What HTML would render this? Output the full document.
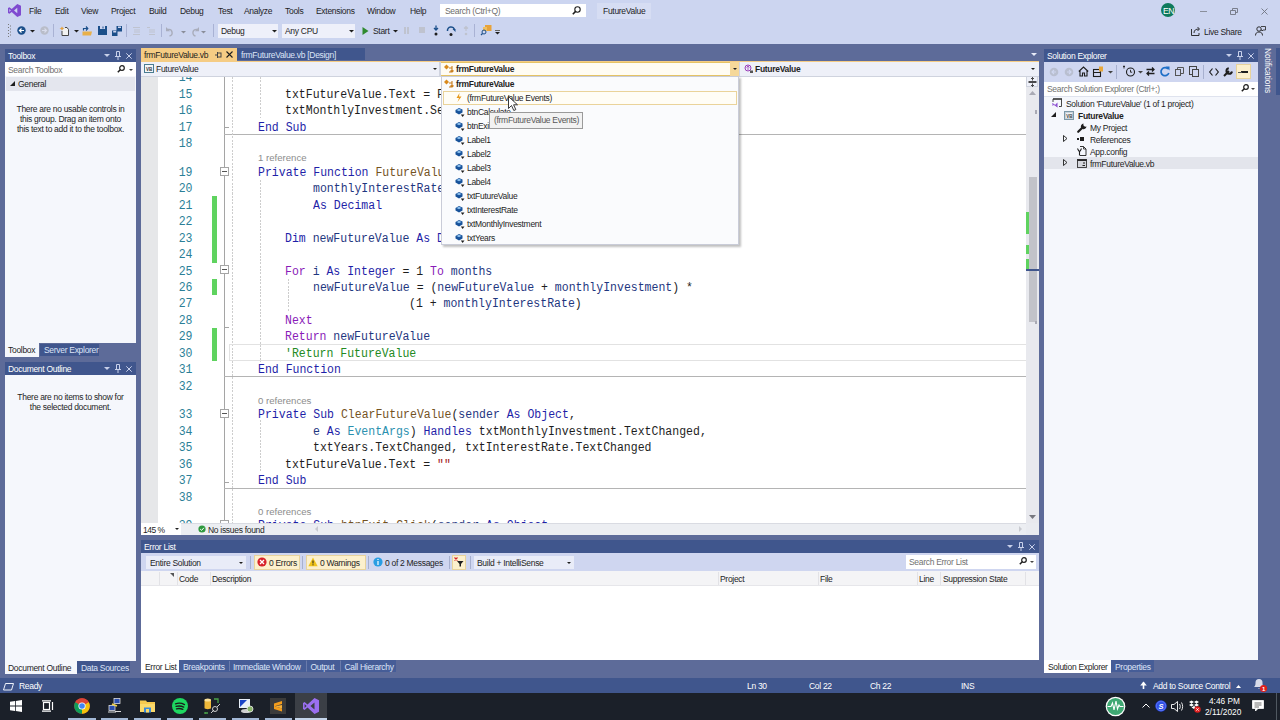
<!DOCTYPE html><html><head><meta charset="utf-8"><style>
html,body{margin:0;padding:0;}
body{width:1280px;height:720px;position:relative;overflow:hidden;background:#ccd5f0;font-family:"Liberation Sans",sans-serif;}
.a{position:absolute;}
.t{position:absolute;white-space:pre;line-height:1;}
.m{position:absolute;white-space:pre;line-height:1;font-family:"Liberation Mono",monospace;}
svg{position:absolute;overflow:visible;}
</style></head><body>
<div class="a" style="left:0px;top:44px;width:1280px;height:634px;background:#5d6b99;"></div>
<div class="a" style="left:0px;top:678px;width:1280px;height:15px;background:#40568d;"></div>
<div class="a" style="left:0px;top:693px;width:1280px;height:27px;background:#1b2029;"></div>
<div class="t" style="left:29px;top:6.5px;font-size:8.5px;color:#1e1e1e;letter-spacing:-0.3px;">File</div>
<div class="t" style="left:55px;top:6.5px;font-size:8.5px;color:#1e1e1e;letter-spacing:-0.3px;">Edit</div>
<div class="t" style="left:81px;top:6.5px;font-size:8.5px;color:#1e1e1e;letter-spacing:-0.3px;">View</div>
<div class="t" style="left:111px;top:6.5px;font-size:8.5px;color:#1e1e1e;letter-spacing:-0.3px;">Project</div>
<div class="t" style="left:149px;top:6.5px;font-size:8.5px;color:#1e1e1e;letter-spacing:-0.3px;">Build</div>
<div class="t" style="left:180px;top:6.5px;font-size:8.5px;color:#1e1e1e;letter-spacing:-0.3px;">Debug</div>
<div class="t" style="left:218px;top:6.5px;font-size:8.5px;color:#1e1e1e;letter-spacing:-0.3px;">Test</div>
<div class="t" style="left:244px;top:6.5px;font-size:8.5px;color:#1e1e1e;letter-spacing:-0.3px;">Analyze</div>
<div class="t" style="left:285px;top:6.5px;font-size:8.5px;color:#1e1e1e;letter-spacing:-0.3px;">Tools</div>
<div class="t" style="left:316px;top:6.5px;font-size:8.5px;color:#1e1e1e;letter-spacing:-0.3px;">Extensions</div>
<div class="t" style="left:367px;top:6.5px;font-size:8.5px;color:#1e1e1e;letter-spacing:-0.3px;">Window</div>
<div class="t" style="left:410px;top:6.5px;font-size:8.5px;color:#1e1e1e;letter-spacing:-0.3px;">Help</div>
<svg style="left:8px;top:4px" width="13" height="13" viewBox="0 0 14 14"><path d="M10 0 L14 2 V12 L10 14 L4 8.5 L1.5 10.5 L0 9.7 V4.3 L1.5 3.5 L4 5.5 Z M10 4 L6.5 7 L10 10 Z M1.5 5.5 V8.5 L3 7 Z" fill="#7f4bd0" fill-rule="evenodd"/></svg>
<div class="a" style="left:440px;top:4px;width:146px;height:13px;background:#fff;"></div>
<div class="t" style="left:445px;top:6.5px;font-size:8.5px;color:#6d6d6d;letter-spacing:-0.3px;">Search (Ctrl+Q)</div>
<svg style="left:572px;top:6px" width="9" height="9"><circle cx="5.5" cy="3.5" r="2.7" stroke="#1e1e1e" fill="none" stroke-width="1.1"/><path d="M3.6 5.4L0.8 8.2" stroke="#1e1e1e" stroke-width="1.6"/></svg>
<div class="a" style="left:597px;top:3px;width:54px;height:16px;background:#d6ddf3;"></div>
<div class="t" style="left:603px;top:6.5px;font-size:8.5px;color:#1e1e1e;letter-spacing:-0.3px;">FutureValue</div>
<div class="a" style="left:1161px;top:3px;width:14px;height:14px;border-radius:7px;background:#0e7a5c"></div>
<div class="t" style="left:1163px;top:6.5px;font-size:8.6px;color:#fff;letter-spacing:-0.4px;">EN</div>
<div class="a" style="left:1200px;top:10.5px;width:7px;height:1.2px;background:#8a8f9c;"></div>
<svg style="left:1230px;top:8px" width="8" height="7"><path d="M0.5 2.5H5.5V6.5H0.5Z M2.5 2.5V0.5H7.5V4.5H5.5" stroke="#6f7480" fill="none" stroke-width="0.9"/></svg>
<svg style="left:1261px;top:8px" width="7" height="7"><path d="M0.5 0.5L6.5 6.5M6.5 0.5L0.5 6.5" stroke="#6f7480" stroke-width="0.9"/></svg>
<div class="t" style="left:1204px;top:28.0px;font-size:8.5px;color:#1e1e1e;letter-spacing:-0.3px;">Live Share</div>
<div class="a" style="left:5px;top:49px;width:131px;height:13px;background:#40568d;"></div>
<div class="t" style="left:8px;top:52.0px;font-size:8.5px;color:#ffffff;letter-spacing:-0.3px;">Toolbox</div>
<svg style="left:104px;top:54px" width="6" height="4"><path d="M0 0H6L3 3Z" fill="#c8d0ea"/></svg>
<svg style="left:115px;top:51px" width="6" height="9"><path d="M1.5 0.5H4.5V5.5H1.5Z M0 5.5H6 M3 5.5V9" stroke="#c8d0ea" fill="none" stroke-width="1"/></svg>
<svg style="left:126px;top:52.5px" width="6" height="6"><path d="M0.3 0.3L5.7 5.7M5.7 0.3L0.3 5.7" stroke="#c8d0ea" stroke-width="1"/></svg>
<div class="a" style="left:5px;top:62px;width:131px;height:14px;background:#ffffff;"></div>
<div class="t" style="left:8px;top:65.5px;font-size:8.5px;color:#717171;letter-spacing:-0.3px;">Search Toolbox</div>
<svg style="left:117px;top:65px" width="8" height="8"><circle cx="5" cy="3" r="2.3" stroke="#1e1e1e" fill="none" stroke-width="1.2"/><path d="M3.3 4.7L0.8 7.2" stroke="#1e1e1e" stroke-width="1.5"/></svg>
<svg style="left:129px;top:69px" width="4" height="3"><path d="M0 0H4L2 2Z" fill="#444"/></svg>
<div class="a" style="left:5px;top:76px;width:131px;height:267px;background:#f5f7fc;"></div>
<div class="a" style="left:6px;top:77px;width:129px;height:14px;background:#e4e6ee;"></div>
<svg style="left:10px;top:81px" width="6" height="6"><path d="M5 0V5H0Z" fill="#1e1e1e"/></svg>
<div class="t" style="left:18px;top:79.5px;font-size:8.5px;color:#1e1e1e;letter-spacing:-0.3px;">General</div>
<div class="t" style="left:5px;width:131px;text-align:center;top:105px;font-size:8.5px;letter-spacing:-0.3px;color:#1e1e1e">There are no usable controls in</div>
<div class="t" style="left:5px;width:131px;text-align:center;top:115px;font-size:8.5px;letter-spacing:-0.3px;color:#1e1e1e">this group. Drag an item onto</div>
<div class="t" style="left:5px;width:131px;text-align:center;top:125px;font-size:8.5px;letter-spacing:-0.3px;color:#1e1e1e">this text to add it to the toolbox.</div>
<div class="a" style="left:5px;top:343px;width:34px;height:14px;background:#f5f7fc;"></div>
<div class="t" style="left:8px;top:345.5px;font-size:8.5px;color:#1e1e1e;letter-spacing:-0.3px;">Toolbox</div>
<div class="a" style="left:40px;top:344px;width:59px;height:12px;background:#40568d;"></div>
<div class="t" style="left:44px;top:345.5px;font-size:8.5px;color:#dde4f7;letter-spacing:-0.3px;">Server Explorer</div>
<div class="a" style="left:5px;top:362px;width:131px;height:13px;background:#40568d;"></div>
<div class="t" style="left:8px;top:365.0px;font-size:8.5px;color:#ffffff;letter-spacing:-0.3px;">Document Outline</div>
<svg style="left:104px;top:367px" width="6" height="4"><path d="M0 0H6L3 3Z" fill="#c8d0ea"/></svg>
<svg style="left:115px;top:364px" width="6" height="9"><path d="M1.5 0.5H4.5V5.5H1.5Z M0 5.5H6 M3 5.5V9" stroke="#c8d0ea" fill="none" stroke-width="1"/></svg>
<svg style="left:126px;top:365.5px" width="6" height="6"><path d="M0.3 0.3L5.7 5.7M5.7 0.3L0.3 5.7" stroke="#c8d0ea" stroke-width="1"/></svg>
<div class="a" style="left:5px;top:375px;width:131px;height:286px;background:#f5f7fc;"></div>
<div class="t" style="left:5px;width:131px;text-align:center;top:393px;font-size:8.5px;letter-spacing:-0.3px;color:#1e1e1e">There are no items to show for</div>
<div class="t" style="left:5px;width:131px;text-align:center;top:403px;font-size:8.5px;letter-spacing:-0.3px;color:#1e1e1e">the selected document.</div>
<div class="a" style="left:5px;top:661px;width:72px;height:13px;background:#f5f7fc;"></div>
<div class="t" style="left:8px;top:663.5px;font-size:8.5px;color:#1e1e1e;letter-spacing:-0.3px;">Document Outline</div>
<div class="a" style="left:77px;top:661px;width:53px;height:12px;background:#40568d;"></div>
<div class="t" style="left:81px;top:663.5px;font-size:8.5px;color:#dde4f7;letter-spacing:-0.3px;">Data Sources</div>
<div class="a" style="left:141px;top:48px;width:96px;height:14px;background:#f5cc84;"></div>
<div class="t" style="left:144px;top:50.5px;font-size:8.5px;color:#1e1e1e;letter-spacing:-0.3px;">frmFutureValue.vb</div>
<svg style="left:215px;top:52px" width="7" height="6"><path d="M0 3H2" stroke="#444" stroke-width="1"/><rect x="2.5" y="1" width="3.5" height="4" stroke="#444" fill="none" stroke-width="1"/><path d="M2.5 0V6" stroke="#444" stroke-width="1"/></svg>
<svg style="left:226px;top:51px" width="7" height="7"><path d="M0.5 0.5L6.5 6.5M6.5 0.5L0.5 6.5" stroke="#1e1e1e" stroke-width="1.1"/></svg>
<div class="a" style="left:237px;top:48px;width:128px;height:12px;background:#40568d;"></div>
<div class="t" style="left:241px;top:50.5px;font-size:8.5px;color:#dde4f7;letter-spacing:-0.3px;">frmFutureValue.vb [Design]</div>
<svg style="left:1031px;top:53px" width="6" height="4"><path d="M0 0H6L3 3Z" fill="#e8ecf8"/></svg>
<div class="a" style="left:141px;top:61px;width:898px;height:1px;background:#f5cc84;"></div>
<div class="a" style="left:141px;top:62px;width:898px;height:14px;background:#eef0f8;"></div>
<div class="a" style="left:141px;top:76px;width:898px;height:1px;background:#cfd3de;"></div>
<svg style="left:144px;top:64px" width="10" height="9"><rect x="0.5" y="0.5" width="9" height="8" fill="#f4f6f8" stroke="#4a7c90"/><text x="2" y="6.5" font-size="4.5" font-family="Liberation Sans" fill="#333" font-weight="bold">VB</text></svg>
<div class="t" style="left:156px;top:65.0px;font-size:8.5px;color:#1e1e1e;letter-spacing:-0.3px;">FutureValue</div>
<svg style="left:433px;top:68px" width="4" height="3"><path d="M0 0H4L2 2Z" fill="#1e1e1e"/></svg>
<div class="a" style="left:439px;top:62px;width:2px;height:14px;background:#d0d4e0;"></div>
<div class="a" style="left:441px;top:62px;width:298px;height:14px;background:#fffcf3;"></div>
<div class="a" style="left:441px;top:62px;width:298px;height:1px;background:#e5c365;"></div>
<div class="a" style="left:441px;top:75px;width:298px;height:1px;background:#e5c365;"></div>
<div class="a" style="left:730px;top:62px;width:9px;height:14px;background:#f5d89a;"></div>
<svg style="left:733px;top:68px" width="4" height="3"><path d="M0 0H4L2 2Z" fill="#1e1e1e"/></svg>
<svg style="left:444px;top:64px" width="10" height="9"><path d="M0 3L2.5 0.5L5 3L2.5 5.5Z" fill="#d98a1e"/><path d="M5 4H8V8H5 M8 4V2 M8 8L6.5 6.5 M8 8L9.5 6.5" stroke="#c87d1c" fill="none" stroke-width="1.1"/></svg>
<div class="t" style="left:456px;top:64.8px;font-size:8.5px;color:#1e1e1e;letter-spacing:-0.3px;"><b>frmFutureValue</b></div>
<div class="a" style="left:739px;top:62px;width:1px;height:14px;background:#d0d4e0;"></div>
<svg style="left:744px;top:64px" width="10" height="10"><circle cx="4" cy="4" r="3" stroke="#9a3fb8" fill="none" stroke-width="1"/><path d="M4 2V6 M2.5 3.5L4 2L5.5 3.5" stroke="#9a3fb8" fill="none" stroke-width="0.8"/><rect x="6" y="6.5" width="3" height="2.5" fill="#555"/></svg>
<div class="t" style="left:755px;top:64.8px;font-size:8.5px;color:#1e1e1e;letter-spacing:-0.3px;"><b>FutureValue</b></div>
<svg style="left:1031px;top:68px" width="4" height="3"><path d="M0 0H4L2 2Z" fill="#1e1e1e"/></svg>
<div class="a" style="left:141px;top:77px;width:17px;height:446px;background:#e6e7e9;"></div>
<div class="a" style="left:158px;top:77px;width:868px;height:446px;background:#ffffff;"></div>
<div class="a" style="left:1026px;top:77px;width:13px;height:446px;background:#e8e9ee;"></div>
<div class="a" style="left:0;top:77px;width:1026px;height:446px;overflow:hidden"><div class="a" style="left:0;top:-77px;width:1280px;height:720px">
<div class="a" style="left:224px;top:77px;width:1px;height:446px;background:#a5a5a5;"></div>
<div class="a" style="left:224px;top:133.5px;width:802px;height:1.2px;background:#b4b4b4;"></div>
<div class="a" style="left:224px;top:375.5px;width:802px;height:1.2px;background:#b4b4b4;"></div>
<div class="a" style="left:224px;top:487.5px;width:802px;height:1.2px;background:#b4b4b4;"></div>
<div class="a" style="left:224px;top:127px;width:5px;height:1px;background:#a5a5a5;"></div>
<div class="a" style="left:224px;top:327px;width:5px;height:1px;background:#a5a5a5;"></div>
<div class="a" style="left:224px;top:482px;width:5px;height:1px;background:#a5a5a5;"></div>
<div class="a" style="left:232px;top:77px;width:1px;height:446px;background:repeating-linear-gradient(to bottom,#cdcdcd 0,#cdcdcd 2px,transparent 2px,transparent 3.3px)"></div>
<div class="a" style="left:260px;top:77px;width:1px;height:41px;background:repeating-linear-gradient(to bottom,#cdcdcd 0,#cdcdcd 2px,transparent 2px,transparent 3.3px)"></div>
<div class="a" style="left:260px;top:180px;width:1px;height:182px;background:repeating-linear-gradient(to bottom,#cdcdcd 0,#cdcdcd 2px,transparent 2px,transparent 3.3px)"></div>
<div class="a" style="left:260px;top:420px;width:1px;height:51px;background:repeating-linear-gradient(to bottom,#cdcdcd 0,#cdcdcd 2px,transparent 2px,transparent 3.3px)"></div>
<div class="a" style="left:288px;top:279px;width:1px;height:32px;background:repeating-linear-gradient(to bottom,#cdcdcd 0,#cdcdcd 2px,transparent 2px,transparent 3.3px)"></div>
<div class="a" style="left:229px;top:344px;width:797px;height:15px;border:1px solid #e2e2e2;border-right:none"></div>
<div class="a" style="left:212px;top:196px;width:5px;height:67px;background:#5fd35f;"></div>
<div class="a" style="left:212px;top:279px;width:5px;height:16px;background:#5fd35f;"></div>
<div class="a" style="left:212px;top:328px;width:5px;height:33px;background:#5fd35f;"></div>
<div class="a" style="left:219.5px;top:166.7px;width:7px;height:7px;border:1px solid #a5a5a5;background:#fff"></div>
<div class="a" style="left:221.5px;top:170.7px;width:5px;height:1px;background:#555;"></div>
<div class="a" style="left:219.5px;top:265.4px;width:7px;height:7px;border:1px solid #a5a5a5;background:#fff"></div>
<div class="a" style="left:221.5px;top:269.4px;width:5px;height:1px;background:#555;"></div>
<div class="a" style="left:219.5px;top:409.3px;width:7px;height:7px;border:1px solid #a5a5a5;background:#fff"></div>
<div class="a" style="left:221.5px;top:413.3px;width:5px;height:1px;background:#555;"></div>
<div class="a" style="left:219.5px;top:520.3px;width:7px;height:7px;border:1px solid #a5a5a5;background:#fff"></div>
<div class="a" style="left:221.5px;top:524.3px;width:5px;height:1px;background:#555;"></div>
<div class="m" style="left:149px;width:43.5px;text-align:right;top:72.25px;font-size:12px;color:#2b7f98;transform:scaleX(0.9593);transform-origin:100% 0">14</div>
<div class="m" style="left:149px;width:43.5px;text-align:right;top:88.70px;font-size:12px;color:#2b7f98;transform:scaleX(0.9593);transform-origin:100% 0">15</div>
<div class="m" style="left:149px;width:43.5px;text-align:right;top:105.15px;font-size:12px;color:#2b7f98;transform:scaleX(0.9593);transform-origin:100% 0">16</div>
<div class="m" style="left:149px;width:43.5px;text-align:right;top:121.60px;font-size:12px;color:#2b7f98;transform:scaleX(0.9593);transform-origin:100% 0">17</div>
<div class="m" style="left:149px;width:43.5px;text-align:right;top:138.05px;font-size:12px;color:#2b7f98;transform:scaleX(0.9593);transform-origin:100% 0">18</div>
<div class="m" style="left:149px;width:43.5px;text-align:right;top:166.80px;font-size:12px;color:#2b7f98;transform:scaleX(0.9593);transform-origin:100% 0">19</div>
<div class="m" style="left:149px;width:43.5px;text-align:right;top:183.25px;font-size:12px;color:#2b7f98;transform:scaleX(0.9593);transform-origin:100% 0">20</div>
<div class="m" style="left:149px;width:43.5px;text-align:right;top:199.70px;font-size:12px;color:#2b7f98;transform:scaleX(0.9593);transform-origin:100% 0">21</div>
<div class="m" style="left:149px;width:43.5px;text-align:right;top:216.15px;font-size:12px;color:#2b7f98;transform:scaleX(0.9593);transform-origin:100% 0">22</div>
<div class="m" style="left:149px;width:43.5px;text-align:right;top:232.60px;font-size:12px;color:#2b7f98;transform:scaleX(0.9593);transform-origin:100% 0">23</div>
<div class="m" style="left:149px;width:43.5px;text-align:right;top:249.05px;font-size:12px;color:#2b7f98;transform:scaleX(0.9593);transform-origin:100% 0">24</div>
<div class="m" style="left:149px;width:43.5px;text-align:right;top:265.50px;font-size:12px;color:#2b7f98;transform:scaleX(0.9593);transform-origin:100% 0">25</div>
<div class="m" style="left:149px;width:43.5px;text-align:right;top:281.95px;font-size:12px;color:#2b7f98;transform:scaleX(0.9593);transform-origin:100% 0">26</div>
<div class="m" style="left:149px;width:43.5px;text-align:right;top:298.40px;font-size:12px;color:#2b7f98;transform:scaleX(0.9593);transform-origin:100% 0">27</div>
<div class="m" style="left:149px;width:43.5px;text-align:right;top:314.85px;font-size:12px;color:#2b7f98;transform:scaleX(0.9593);transform-origin:100% 0">28</div>
<div class="m" style="left:149px;width:43.5px;text-align:right;top:331.30px;font-size:12px;color:#2b7f98;transform:scaleX(0.9593);transform-origin:100% 0">29</div>
<div class="m" style="left:149px;width:43.5px;text-align:right;top:347.75px;font-size:12px;color:#2b7f98;transform:scaleX(0.9593);transform-origin:100% 0">30</div>
<div class="m" style="left:149px;width:43.5px;text-align:right;top:364.20px;font-size:12px;color:#2b7f98;transform:scaleX(0.9593);transform-origin:100% 0">31</div>
<div class="m" style="left:149px;width:43.5px;text-align:right;top:380.65px;font-size:12px;color:#2b7f98;transform:scaleX(0.9593);transform-origin:100% 0">32</div>
<div class="m" style="left:149px;width:43.5px;text-align:right;top:409.40px;font-size:12px;color:#2b7f98;transform:scaleX(0.9593);transform-origin:100% 0">33</div>
<div class="m" style="left:149px;width:43.5px;text-align:right;top:425.85px;font-size:12px;color:#2b7f98;transform:scaleX(0.9593);transform-origin:100% 0">34</div>
<div class="m" style="left:149px;width:43.5px;text-align:right;top:442.30px;font-size:12px;color:#2b7f98;transform:scaleX(0.9593);transform-origin:100% 0">35</div>
<div class="m" style="left:149px;width:43.5px;text-align:right;top:458.75px;font-size:12px;color:#2b7f98;transform:scaleX(0.9593);transform-origin:100% 0">36</div>
<div class="m" style="left:149px;width:43.5px;text-align:right;top:475.20px;font-size:12px;color:#2b7f98;transform:scaleX(0.9593);transform-origin:100% 0">37</div>
<div class="m" style="left:149px;width:43.5px;text-align:right;top:491.65px;font-size:12px;color:#2b7f98;transform:scaleX(0.9593);transform-origin:100% 0">38</div>
<div class="m" style="left:149px;width:43.5px;text-align:right;top:520.40px;font-size:12px;color:#2b7f98;transform:scaleX(0.9593);transform-origin:100% 0">39</div>
<div class="m" style="left:285.16px;top:88.70px;font-size:12px;transform:scaleX(0.9593);transform-origin:0 0"><span style="color:#1e1e1e">txtFutureValue.Text = FormatCurrency(futureValue)</span></div>
<div class="m" style="left:285.16px;top:105.15px;font-size:12px;transform:scaleX(0.9593);transform-origin:0 0"><span style="color:#1e1e1e">txtMonthlyInvestment.Select()</span></div>
<div class="m" style="left:257.53px;top:121.60px;font-size:12px;transform:scaleX(0.9593);transform-origin:0 0"><span style="color:#1f1fa8">End Sub</span></div>
<div class="m" style="left:257.53px;top:166.80px;font-size:12px;transform:scaleX(0.9593);transform-origin:0 0"><span style="color:#1f1fa8">Private Function </span><span style="color:#74531f">FutureValue</span><span style="color:#1e1e1e">(monthlyInvestment As Decimal,</span></div>
<div class="m" style="left:312.78px;top:183.25px;font-size:12px;transform:scaleX(0.9593);transform-origin:0 0"><span style="color:#1f377f">monthlyInterestRate</span><span style="color:#1e1e1e"> As Decimal, months As Integer)</span></div>
<div class="m" style="left:312.78px;top:199.70px;font-size:12px;transform:scaleX(0.9593);transform-origin:0 0"><span style="color:#1f1fa8">As Decimal</span></div>
<div class="m" style="left:285.16px;top:232.60px;font-size:12px;transform:scaleX(0.9593);transform-origin:0 0"><span style="color:#1f1fa8">Dim </span><span style="color:#1f377f">newFutureValue</span><span style="color:#1f1fa8"> As Decimal</span></div>
<div class="m" style="left:285.16px;top:265.50px;font-size:12px;transform:scaleX(0.9593);transform-origin:0 0"><span style="color:#8a1bb8">For </span><span style="color:#1f377f">i</span><span style="color:#1f1fa8"> As Integer</span><span style="color:#1e1e1e"> = 1 </span><span style="color:#8a1bb8">To </span><span style="color:#1f377f">months</span></div>
<div class="m" style="left:312.78px;top:281.95px;font-size:12px;transform:scaleX(0.9593);transform-origin:0 0"><span style="color:#1f377f">newFutureValue</span><span style="color:#1e1e1e"> = (</span><span style="color:#1f377f">newFutureValue</span><span style="color:#1e1e1e"> + </span><span style="color:#1f377f">monthlyInvestment</span><span style="color:#1e1e1e">) *</span></div>
<div class="m" style="left:409.48px;top:298.40px;font-size:12px;transform:scaleX(0.9593);transform-origin:0 0"><span style="color:#1e1e1e">(1 + </span><span style="color:#1f377f">monthlyInterestRate</span><span style="color:#1e1e1e">)</span></div>
<div class="m" style="left:285.16px;top:314.85px;font-size:12px;transform:scaleX(0.9593);transform-origin:0 0"><span style="color:#8a1bb8">Next</span></div>
<div class="m" style="left:285.16px;top:331.30px;font-size:12px;transform:scaleX(0.9593);transform-origin:0 0"><span style="color:#8a1bb8">Return </span><span style="color:#1f377f">newFutureValue</span></div>
<div class="m" style="left:285.16px;top:347.75px;font-size:12px;transform:scaleX(0.9593);transform-origin:0 0"><span style="color:#238a23">'Return FutureValue</span></div>
<div class="m" style="left:257.53px;top:364.20px;font-size:12px;transform:scaleX(0.9593);transform-origin:0 0"><span style="color:#1f1fa8">End Function</span></div>
<div class="m" style="left:257.53px;top:409.40px;font-size:12px;transform:scaleX(0.9593);transform-origin:0 0"><span style="color:#1f1fa8">Private Sub </span><span style="color:#74531f">ClearFutureValue</span><span style="color:#1e1e1e">(</span><span style="color:#1f377f">sender</span><span style="color:#1f1fa8"> As Object</span><span style="color:#1e1e1e">,</span></div>
<div class="m" style="left:312.78px;top:425.85px;font-size:12px;transform:scaleX(0.9593);transform-origin:0 0"><span style="color:#1f377f">e</span><span style="color:#1f1fa8"> As </span><span style="color:#2b91af">EventArgs</span><span style="color:#1e1e1e">) </span><span style="color:#1f1fa8">Handles</span><span style="color:#1e1e1e"> txtMonthlyInvestment.TextChanged,</span></div>
<div class="m" style="left:312.78px;top:442.30px;font-size:12px;transform:scaleX(0.9593);transform-origin:0 0"><span style="color:#1e1e1e">txtYears.TextChanged, txtInterestRate.TextChanged</span></div>
<div class="m" style="left:285.16px;top:458.75px;font-size:12px;transform:scaleX(0.9593);transform-origin:0 0"><span style="color:#1e1e1e">txtFutureValue.Text = </span><span style="color:#a31515">""</span></div>
<div class="m" style="left:257.53px;top:475.20px;font-size:12px;transform:scaleX(0.9593);transform-origin:0 0"><span style="color:#1f1fa8">End Sub</span></div>
<div class="m" style="left:257.53px;top:520.40px;font-size:12px;transform:scaleX(0.9593);transform-origin:0 0"><span style="color:#1f1fa8">Private Sub </span><span style="color:#74531f">btnExit_Click</span><span style="color:#1e1e1e">(</span><span style="color:#1f377f">sender</span><span style="color:#1f1fa8"> As Object</span><span style="color:#1e1e1e">,</span></div>
<div class="t" style="left:258px;top:152.5px;font-size:9.6px;color:#8d8d8d;">1 reference</div>
<div class="t" style="left:258px;top:395.5px;font-size:9.6px;color:#8d8d8d;">0 references</div>
<div class="t" style="left:258px;top:506.5px;font-size:9.6px;color:#8d8d8d;">0 references</div>
</div></div>
<div class="a" style="left:441px;top:76px;width:296px;height:167px;background:#fafbfd;border:1px solid #c9ccd8;box-shadow:2px 2px 2px rgba(0,0,0,0.25)"></div>
<svg style="left:444px;top:79px" width="10" height="9"><path d="M0 3L2.5 0.5L5 3L2.5 5.5Z" fill="#d98a1e"/><path d="M5 4H8V8H5 M8 4V2 M8 8L6.5 6.5 M8 8L9.5 6.5" stroke="#c87d1c" fill="none" stroke-width="1.1"/></svg>
<div class="t" style="left:456px;top:79.5px;font-size:8.5px;color:#1e1e1e;letter-spacing:-0.3px;"><b>frmFutureValue</b></div>
<div class="a" style="left:443px;top:91px;width:292px;height:12px;background:#fffdf6;border:1px solid #ead39a"></div>
<svg style="left:456px;top:93px" width="6" height="9"><path d="M3.5 0L0.5 5H3L1.5 9L5.5 3.5H3Z" fill="#e79a1e"/></svg>
<div class="t" style="left:467px;top:93.5px;font-size:8.5px;color:#1e1e1e;letter-spacing:-0.3px;">(frmFutureValue Events)</div>
<svg style="left:455px;top:107px" width="10" height="11"><path d="M0.5 3L4 1L7.5 2.5V5.5L4 7.5L0.5 5.5Z" fill="#17529a"/><path d="M1.5 3L4 4.2L6.5 3L4 1.8Z" fill="#8cc0ee"/><path d="M5.8 7.6H9.5L7.65 10Z" fill="#1e1e1e"/></svg>
<div class="t" style="left:467px;top:107.5px;font-size:8.5px;color:#1e1e1e;letter-spacing:-0.3px;">btnCalculate</div>
<svg style="left:455px;top:121px" width="10" height="11"><path d="M0.5 3L4 1L7.5 2.5V5.5L4 7.5L0.5 5.5Z" fill="#17529a"/><path d="M1.5 3L4 4.2L6.5 3L4 1.8Z" fill="#8cc0ee"/><path d="M5.8 7.6H9.5L7.65 10Z" fill="#1e1e1e"/></svg>
<div class="t" style="left:467px;top:121.5px;font-size:8.5px;color:#1e1e1e;letter-spacing:-0.3px;">btnExit</div>
<svg style="left:455px;top:135px" width="10" height="11"><path d="M0.5 3L4 1L7.5 2.5V5.5L4 7.5L0.5 5.5Z" fill="#17529a"/><path d="M1.5 3L4 4.2L6.5 3L4 1.8Z" fill="#8cc0ee"/><path d="M5.8 7.6H9.5L7.65 10Z" fill="#1e1e1e"/></svg>
<div class="t" style="left:467px;top:135.5px;font-size:8.5px;color:#1e1e1e;letter-spacing:-0.3px;">Label1</div>
<svg style="left:455px;top:149px" width="10" height="11"><path d="M0.5 3L4 1L7.5 2.5V5.5L4 7.5L0.5 5.5Z" fill="#17529a"/><path d="M1.5 3L4 4.2L6.5 3L4 1.8Z" fill="#8cc0ee"/><path d="M5.8 7.6H9.5L7.65 10Z" fill="#1e1e1e"/></svg>
<div class="t" style="left:467px;top:149.5px;font-size:8.5px;color:#1e1e1e;letter-spacing:-0.3px;">Label2</div>
<svg style="left:455px;top:163px" width="10" height="11"><path d="M0.5 3L4 1L7.5 2.5V5.5L4 7.5L0.5 5.5Z" fill="#17529a"/><path d="M1.5 3L4 4.2L6.5 3L4 1.8Z" fill="#8cc0ee"/><path d="M5.8 7.6H9.5L7.65 10Z" fill="#1e1e1e"/></svg>
<div class="t" style="left:467px;top:163.5px;font-size:8.5px;color:#1e1e1e;letter-spacing:-0.3px;">Label3</div>
<svg style="left:455px;top:177px" width="10" height="11"><path d="M0.5 3L4 1L7.5 2.5V5.5L4 7.5L0.5 5.5Z" fill="#17529a"/><path d="M1.5 3L4 4.2L6.5 3L4 1.8Z" fill="#8cc0ee"/><path d="M5.8 7.6H9.5L7.65 10Z" fill="#1e1e1e"/></svg>
<div class="t" style="left:467px;top:177.5px;font-size:8.5px;color:#1e1e1e;letter-spacing:-0.3px;">Label4</div>
<svg style="left:455px;top:191px" width="10" height="11"><path d="M0.5 3L4 1L7.5 2.5V5.5L4 7.5L0.5 5.5Z" fill="#17529a"/><path d="M1.5 3L4 4.2L6.5 3L4 1.8Z" fill="#8cc0ee"/><path d="M5.8 7.6H9.5L7.65 10Z" fill="#1e1e1e"/></svg>
<div class="t" style="left:467px;top:191.5px;font-size:8.5px;color:#1e1e1e;letter-spacing:-0.3px;">txtFutureValue</div>
<svg style="left:455px;top:205px" width="10" height="11"><path d="M0.5 3L4 1L7.5 2.5V5.5L4 7.5L0.5 5.5Z" fill="#17529a"/><path d="M1.5 3L4 4.2L6.5 3L4 1.8Z" fill="#8cc0ee"/><path d="M5.8 7.6H9.5L7.65 10Z" fill="#1e1e1e"/></svg>
<div class="t" style="left:467px;top:205.5px;font-size:8.5px;color:#1e1e1e;letter-spacing:-0.3px;">txtInterestRate</div>
<svg style="left:455px;top:219px" width="10" height="11"><path d="M0.5 3L4 1L7.5 2.5V5.5L4 7.5L0.5 5.5Z" fill="#17529a"/><path d="M1.5 3L4 4.2L6.5 3L4 1.8Z" fill="#8cc0ee"/><path d="M5.8 7.6H9.5L7.65 10Z" fill="#1e1e1e"/></svg>
<div class="t" style="left:467px;top:219.5px;font-size:8.5px;color:#1e1e1e;letter-spacing:-0.3px;">txtMonthlyInvestment</div>
<svg style="left:455px;top:233px" width="10" height="11"><path d="M0.5 3L4 1L7.5 2.5V5.5L4 7.5L0.5 5.5Z" fill="#17529a"/><path d="M1.5 3L4 4.2L6.5 3L4 1.8Z" fill="#8cc0ee"/><path d="M5.8 7.6H9.5L7.65 10Z" fill="#1e1e1e"/></svg>
<div class="t" style="left:467px;top:233.5px;font-size:8.5px;color:#1e1e1e;letter-spacing:-0.3px;">txtYears</div>
<div class="a" style="left:489px;top:112px;width:92px;height:15px;background:#f2f2f2;border:1px solid #9a9a9a"></div>
<div class="t" style="left:494px;top:115.5px;font-size:8.5px;color:#575757;letter-spacing:-0.3px;">(frmFutureValue Events)</div>
<svg style="left:508px;top:96px" width="10" height="16"><path d="M0.5 0.5V12.5L3.5 9.5L5.8 14.5L7.8 13.6L5.6 8.8H9.5Z" fill="#fff" stroke="#222" stroke-width="0.9"/></svg>
<div class="a" style="left:1026px;top:76px;width:12px;height:11px;background:#eef0f8;border:1px solid #cfd3de;box-sizing:border-box"></div>
<svg style="left:1028px;top:77px" width="9" height="10"><path d="M0.5 4.5H8.5M0.5 5.5H8.5 M4.5 0.5V3.5 M4.5 6.5V9.5 M3 2L4.5 0.5L6 2 M3 8L4.5 9.5L6 8" stroke="#1e1e1e" fill="none" stroke-width="0.8"/></svg>
<svg style="left:1029px;top:91px" width="7" height="4"><path d="M0 4L3.5 0L7 4Z" fill="#a9aab4"/></svg>
<div class="a" style="left:1035px;top:110px;width:2px;height:4px;background:#a9aab4;"></div>
<div class="a" style="left:1029px;top:177px;width:8px;height:145px;background:#c2c3c9;"></div>
<div class="a" style="left:1026px;top:212px;width:3px;height:22px;background:#5fd35f;"></div>
<div class="a" style="left:1026px;top:245px;width:3px;height:9px;background:#5fd35f;"></div>
<div class="a" style="left:1026px;top:259px;width:3px;height:10px;background:#5fd35f;"></div>
<div class="a" style="left:1026px;top:269px;width:13px;height:1.5px;background:#40568d;"></div>
<div class="a" style="left:1035px;top:321px;width:2px;height:3px;background:#a9aab4;"></div>
<svg style="left:1029px;top:515px" width="7" height="4"><path d="M0 0L7 0L3.5 4Z" fill="#77787f"/></svg>
<div class="a" style="left:141px;top:523px;width:885px;height:12px;background:#eceef2;"></div>
<div class="a" style="left:141px;top:523px;width:885px;height:1px;background:#d9dbe2;"></div>
<div class="a" style="left:1026px;top:523px;width:13px;height:12px;background:#e9ebf0;"></div>
<div class="a" style="left:141px;top:523px;width:40px;height:12px;background:#ffffff;"></div>
<div class="t" style="left:143px;top:525.5px;font-size:8.5px;color:#1e1e1e;letter-spacing:-0.3px;letter-spacing:-0.5px;">145 %</div>
<svg style="left:175px;top:528px" width="4" height="3"><path d="M0 0H4L2 2Z" fill="#1e1e1e"/></svg>
<svg style="left:198px;top:525px" width="8" height="8"><circle cx="4" cy="4" r="3.6" fill="#2f9a3e"/><path d="M2.2 4.1L3.6 5.4L5.9 2.8" stroke="#fff" stroke-width="1" fill="none"/></svg>
<div class="t" style="left:208px;top:525.5px;font-size:8.5px;color:#1e1e1e;letter-spacing:-0.3px;">No issues found</div>
<svg style="left:315px;top:526px" width="3" height="6"><path d="M3 0V6L0 3Z" fill="#c8cad0"/></svg>
<svg style="left:1019px;top:526px" width="3" height="6"><path d="M0 0V6L3 3Z" fill="#c8cad0"/></svg>
<div class="a" style="left:141px;top:540px;width:898px;height:13px;background:#40568d;"></div>
<div class="t" style="left:144px;top:543.0px;font-size:8.5px;color:#ffffff;letter-spacing:-0.3px;">Error List</div>
<svg style="left:1007px;top:545px" width="6" height="4"><path d="M0 0H6L3 3Z" fill="#c8d0ea"/></svg>
<svg style="left:1018px;top:542px" width="6" height="9"><path d="M1.5 0.5H4.5V5.5H1.5Z M0 5.5H6 M3 5.5V9" stroke="#c8d0ea" fill="none" stroke-width="1"/></svg>
<svg style="left:1029px;top:543.5px" width="6" height="6"><path d="M0.3 0.3L5.7 5.7M5.7 0.3L0.3 5.7" stroke="#c8d0ea" stroke-width="1"/></svg>
<div class="a" style="left:141px;top:553px;width:898px;height:18px;background:#cfd6f0;"></div>
<div class="a" style="left:146px;top:556px;width:100px;height:13px;background:#e9ecf8;"></div>
<div class="t" style="left:150px;top:558.5px;font-size:8.5px;color:#1e1e1e;letter-spacing:-0.3px;">Entire Solution</div>
<svg style="left:239px;top:562px" width="4" height="3"><path d="M0 0H4L2 2Z" fill="#1e1e1e"/></svg>
<div class="a" style="left:250px;top:556px;width:1px;height:13px;background:#a7b0cf;"></div>
<div class="a" style="left:253.5px;top:555px;width:44.5px;height:13px;background:#fcf0cd;border:1px solid #e8d39c"></div>
<svg style="left:257px;top:557px" width="10" height="10"><circle cx="5" cy="5" r="4.6" fill="#d7212a"/><path d="M3 3L7 7M7 3L3 7" stroke="#fff" stroke-width="1.3"/></svg>
<div class="t" style="left:269px;top:558.5px;font-size:8.5px;color:#1e1e1e;letter-spacing:-0.3px;">0 Errors</div>
<div class="a" style="left:302px;top:556px;width:1px;height:13px;background:#a7b0cf;"></div>
<div class="a" style="left:305.5px;top:555px;width:58px;height:13px;background:#fcf0cd;border:1px solid #e8d39c"></div>
<svg style="left:308px;top:557px" width="10" height="10"><path d="M5 0.5L9.7 9.3H0.3Z" fill="#f0c31b"/><path d="M5 3.5V6.5M5 7.3V8.3" stroke="#1e1e1e" stroke-width="1"/></svg>
<div class="t" style="left:320px;top:558.5px;font-size:8.5px;color:#1e1e1e;letter-spacing:-0.3px;">0 Warnings</div>
<div class="a" style="left:368px;top:556px;width:1px;height:13px;background:#a7b0cf;"></div>
<svg style="left:373px;top:557px" width="10" height="10"><circle cx="5" cy="5" r="4.6" fill="#2a9ee3"/><path d="M5 4V8M5 2V3" stroke="#fff" stroke-width="1.2"/></svg>
<div class="t" style="left:385px;top:558.5px;font-size:8.5px;color:#1e1e1e;letter-spacing:-0.3px;">0 of 2 Messages</div>
<div class="a" style="left:449px;top:556px;width:1px;height:13px;background:#a7b0cf;"></div>
<div class="a" style="left:452px;top:555px;width:12px;height:13px;background:#fcf0cd;border:1px solid #e8d39c"></div>
<svg style="left:454px;top:557px" width="10" height="10"><path d="M0.5 0.5L3.5 3.5M3.5 0.5L0.5 3.5" stroke="#d7212a" stroke-width="1.1"/><path d="M3 4H9.5L7 7V9.5H5.5V7Z" fill="#1e1e1e"/></svg>
<div class="a" style="left:470px;top:556px;width:1px;height:13px;background:#a7b0cf;"></div>
<div class="a" style="left:474px;top:556px;width:100px;height:13px;background:#e9ecf8;"></div>
<div class="t" style="left:477px;top:558.5px;font-size:8.5px;color:#1e1e1e;letter-spacing:-0.3px;">Build + IntelliSense</div>
<svg style="left:567px;top:562px" width="4" height="3"><path d="M0 0H4L2 2Z" fill="#1e1e1e"/></svg>
<div class="a" style="left:906px;top:555px;width:130px;height:14px;background:#ffffff;"></div>
<div class="t" style="left:909px;top:557.5px;font-size:8.5px;color:#717171;letter-spacing:-0.3px;">Search Error List</div>
<svg style="left:1019px;top:557px" width="8" height="8"><circle cx="5" cy="3" r="2.3" stroke="#1e1e1e" fill="none" stroke-width="1.2"/><path d="M3.3 4.7L0.8 7.2" stroke="#1e1e1e" stroke-width="1.5"/></svg>
<svg style="left:1030px;top:561px" width="4" height="3"><path d="M0 0H4L2 2Z" fill="#444"/></svg>
<div class="a" style="left:141px;top:571px;width:898px;height:14px;background:#f4f4f6;"></div>
<div class="a" style="left:141px;top:585px;width:898px;height:1px;background:#e6e6ea;"></div>
<div class="a" style="left:159px;top:572px;width:1px;height:13px;background:#e2e2e6;"></div>
<div class="a" style="left:177px;top:572px;width:1px;height:13px;background:#e2e2e6;"></div>
<div class="a" style="left:210px;top:572px;width:1px;height:13px;background:#e2e2e6;"></div>
<div class="a" style="left:718px;top:572px;width:1px;height:13px;background:#e2e2e6;"></div>
<div class="a" style="left:818px;top:572px;width:1px;height:13px;background:#e2e2e6;"></div>
<div class="a" style="left:917px;top:572px;width:1px;height:13px;background:#e2e2e6;"></div>
<div class="a" style="left:940px;top:572px;width:1px;height:13px;background:#e2e2e6;"></div>
<div class="a" style="left:1025px;top:572px;width:1px;height:13px;background:#e2e2e6;"></div>
<svg style="left:170px;top:573px" width="4" height="4"><path d="M0 0H4V4Z" fill="#555"/></svg>
<div class="t" style="left:179px;top:574.5px;font-size:8.5px;color:#1e1e1e;letter-spacing:-0.3px;">Code</div>
<div class="t" style="left:212px;top:574.5px;font-size:8.5px;color:#1e1e1e;letter-spacing:-0.3px;">Description</div>
<div class="t" style="left:720px;top:574.5px;font-size:8.5px;color:#1e1e1e;letter-spacing:-0.3px;">Project</div>
<div class="t" style="left:820px;top:574.5px;font-size:8.5px;color:#1e1e1e;letter-spacing:-0.3px;">File</div>
<div class="t" style="left:919px;top:574.5px;font-size:8.5px;color:#1e1e1e;letter-spacing:-0.3px;">Line</div>
<div class="t" style="left:943px;top:574.5px;font-size:8.5px;color:#1e1e1e;letter-spacing:-0.3px;">Suppression State</div>
<div class="a" style="left:141px;top:586px;width:898px;height:74px;background:#ffffff;"></div>
<div class="a" style="left:141px;top:660px;width:38px;height:13px;background:#ffffff;"></div>
<div class="t" style="left:145px;top:662.5px;font-size:8.5px;color:#1e1e1e;letter-spacing:-0.3px;">Error List</div>
<div class="a" style="left:179px;top:660px;width:49.5px;height:12px;background:#465d97;"></div>
<div class="t" style="left:183px;top:662.5px;font-size:8.5px;color:#dde4f7;letter-spacing:-0.3px;">Breakpoints</div>
<div class="a" style="left:229px;top:660px;width:77px;height:12px;background:#465d97;"></div>
<div class="t" style="left:233px;top:662.5px;font-size:8.5px;color:#dde4f7;letter-spacing:-0.3px;">Immediate Window</div>
<div class="a" style="left:306.5px;top:660px;width:33.5px;height:12px;background:#465d97;"></div>
<div class="t" style="left:310.5px;top:662.5px;font-size:8.5px;color:#dde4f7;letter-spacing:-0.3px;">Output</div>
<div class="a" style="left:340.5px;top:660px;width:55.5px;height:12px;background:#465d97;"></div>
<div class="t" style="left:344.5px;top:662.5px;font-size:8.5px;color:#dde4f7;letter-spacing:-0.3px;">Call Hierarchy</div>
<div class="a" style="left:228.5px;top:661px;width:1px;height:10px;background:#6a7bab;"></div>
<div class="a" style="left:306px;top:661px;width:1px;height:10px;background:#6a7bab;"></div>
<div class="a" style="left:340px;top:661px;width:1px;height:10px;background:#6a7bab;"></div>
<div class="a" style="left:1044px;top:49px;width:214px;height:13px;background:#40568d;"></div>
<div class="t" style="left:1047px;top:52.0px;font-size:8.5px;color:#ffffff;letter-spacing:-0.3px;">Solution Explorer</div>
<svg style="left:1226px;top:54px" width="6" height="4"><path d="M0 0H6L3 3Z" fill="#c8d0ea"/></svg>
<svg style="left:1237px;top:51px" width="6" height="9"><path d="M1.5 0.5H4.5V5.5H1.5Z M0 5.5H6 M3 5.5V9" stroke="#c8d0ea" fill="none" stroke-width="1"/></svg>
<svg style="left:1248px;top:52.5px" width="6" height="6"><path d="M0.3 0.3L5.7 5.7M5.7 0.3L0.3 5.7" stroke="#c8d0ea" stroke-width="1"/></svg>
<div class="a" style="left:1044px;top:62px;width:214px;height:20px;background:#cfd6f0;"></div>
<svg style="left:1049px;top:67px" width="10" height="10"><circle cx="5" cy="5" r="4.3" fill="#b9bfd0"/><path d="M7 5H3M5 3L3 5L5 7" stroke="#cfd6f0" stroke-width="1.1" fill="none"/></svg>
<svg style="left:1064px;top:67px" width="10" height="10"><circle cx="5" cy="5" r="4.3" fill="#b9bfd0"/><path d="M3 5H7M5 3L7 5L5 7" stroke="#cfd6f0" stroke-width="1.1" fill="none"/></svg>
<svg style="left:1078px;top:66px" width="11" height="11"><path d="M0.8 5.5L5.5 1L10.2 5.5 M2 4.5V10H4.5V7H6.5V10H9V4.5" stroke="#1e1e1e" fill="none" stroke-width="1.1"/></svg>
<svg style="left:1093px;top:66px" width="12" height="11"><rect x="0.5" y="3.5" width="7" height="7" stroke="#1e1e1e" fill="none" stroke-width="1.1"/><path d="M0.5 6.5H7.5" stroke="#1e1e1e"/><rect x="6" y="0.5" width="4" height="5" fill="#e8a73a"/></svg>
<svg style="left:1108px;top:71px" width="5" height="3"><path d="M0 0H5L2.5 2.5Z" fill="#444"/></svg>
<div class="a" style="left:1116px;top:65px;width:1px;height:14px;background:#a7b0cf;"></div>
<svg style="left:1123px;top:65px" width="13" height="12"><circle cx="7.5" cy="7" r="4" stroke="#1e1e1e" fill="none" stroke-width="1.1"/><path d="M7.5 4.8V7.2H9.2 M1 0.5V3.5 M0 1.5H2" stroke="#1e1e1e" fill="none" stroke-width="0.9"/></svg>
<svg style="left:1138px;top:71px" width="5" height="3"><path d="M0 0H5L2.5 2.5Z" fill="#444"/></svg>
<svg style="left:1146px;top:67px" width="9" height="9"><path d="M0.5 2.5H8M6 0.5L8 2.5L6 4.5 M8.5 6.5H1M3 4.5L1 6.5L3 8.5" stroke="#1e1e1e" fill="none" stroke-width="1.3"/></svg>
<svg style="left:1160px;top:66px" width="10" height="11"><path d="M8 3A4 4 0 1 0 8.8 7" stroke="#1e6fc7" fill="none" stroke-width="1.7"/><path d="M5.5 0.5H9.5V4.5Z" fill="#1e6fc7"/></svg>
<svg style="left:1175px;top:67px" width="9" height="9"><rect x="0.5" y="2.5" width="5" height="6" stroke="#555" fill="#cfd6f0"/><path d="M2.5 2.5V0.5H8.5V6.5H5.5" stroke="#555" fill="none"/></svg>
<svg style="left:1189px;top:66px" width="10" height="11"><rect x="0.5" y="0.5" width="7" height="8" stroke="#444" fill="none"/><rect x="3.5" y="3.5" width="6" height="7" stroke="#444" fill="#cfd6f0"/></svg>
<div class="a" style="left:1203px;top:65px;width:1px;height:14px;background:#a7b0cf;"></div>
<svg style="left:1209px;top:68px" width="10" height="8"><path d="M3.5 0.5L0.7 4L3.5 7.5M6.5 0.5L9.3 4L6.5 7.5" stroke="#1e1e1e" fill="none" stroke-width="1.2"/></svg>
<svg style="left:1223px;top:66px" width="11" height="11"><path d="M1 10L6 5M5.8 2.2A2.8 2.8 0 1 0 9 5.5" stroke="#1e1e1e" fill="none" stroke-width="2"/></svg>
<div class="a" style="left:1236px;top:64px;width:13px;height:13px;background:#fcf0cd;border:1px solid #e8d39c"></div>
<div class="a" style="left:1241px;top:71px;width:7px;height:2px;background:#1e1e1e;"></div>
<div class="a" style="left:1238px;top:72px;width:4px;height:1px;background:#555;"></div>
<div class="a" style="left:1044px;top:82px;width:214px;height:14px;background:#ffffff;"></div>
<div class="t" style="left:1047px;top:84.5px;font-size:8.5px;color:#717171;letter-spacing:-0.3px;">Search Solution Explorer (Ctrl+;)</div>
<svg style="left:1241px;top:84px" width="8" height="8"><circle cx="5" cy="3" r="2.3" stroke="#1e1e1e" fill="none" stroke-width="1.2"/><path d="M3.3 4.7L0.8 7.2" stroke="#1e1e1e" stroke-width="1.5"/></svg>
<svg style="left:1251px;top:88px" width="4" height="3"><path d="M0 0H4L2 2Z" fill="#444"/></svg>
<div class="a" style="left:1044px;top:96px;width:214px;height:564px;background:#f5f7fc;"></div>
<div class="a" style="left:1044px;top:96px;width:214px;height:1px;background:#dfe3ee;"></div>
<div class="a" style="left:1044px;top:157px;width:214px;height:12px;background:#e3e5ec;"></div>
<svg style="left:1052px;top:98px" width="11" height="10"><path d="M1 1H10" stroke="#333" stroke-width="1.6"/><path d="M9.5 1V8.5H7" stroke="#333" stroke-width="0.9" fill="none"/><path d="M1 1V4" stroke="#333" stroke-width="0.9"/><path d="M5.5 4.5L3.2 6.8L5.5 9V4.5Z M0.5 5.5L2 6.8L0.5 8Z" fill="#8a4bd0"/><path d="M0.5 5.5L5.5 9" stroke="#8a4bd0" stroke-width="1"/></svg>
<div class="t" style="left:1066px;top:99.5px;font-size:8.5px;color:#1e1e1e;letter-spacing:-0.3px;">Solution 'FutureValue' (1 of 1 project)</div>
<svg style="left:1051px;top:112px" width="5" height="5"><path d="M5 0V5H0Z" fill="#1e1e1e"/></svg>
<svg style="left:1064px;top:111px" width="10" height="9"><rect x="0.5" y="0.5" width="9" height="8" fill="#c9d3dc" stroke="#7d98a8"/><rect x="2" y="2" width="6" height="5" fill="#eef2f5"/><text x="2.2" y="6.6" font-size="4.5" font-family="Liberation Sans" fill="#444" font-weight="bold">VB</text></svg>
<div class="t" style="left:1078px;top:111.5px;font-size:8.5px;color:#1e1e1e;letter-spacing:-0.3px;"><b>FutureValue</b></div>
<svg style="left:1077px;top:123px" width="10" height="10"><path d="M1.2 8.8L5 5" stroke="#1e1e1e" stroke-width="2.2" stroke-linecap="round"/><path d="M6.5 0.5A3 3 0 0 0 4 4.5L5.5 6A3 3 0 0 0 9.5 3.5L8 3.8L6.3 2.2Z" fill="#1e1e1e"/></svg>
<div class="t" style="left:1090px;top:123.5px;font-size:8.5px;color:#1e1e1e;letter-spacing:-0.3px;">My Project</div>
<svg style="left:1063px;top:135px" width="5" height="7"><path d="M0.5 0.5L4 3.5L0.5 6.5Z" stroke="#1e1e1e" fill="none" stroke-width="0.9"/></svg>
<div class="a" style="left:1077px;top:138px;width:2px;height:2px;background:#1e1e1e;"></div>
<div class="a" style="left:1080px;top:137px;width:4px;height:4px;background:#1e1e1e;"></div>
<div class="t" style="left:1090px;top:135.5px;font-size:8.5px;color:#1e1e1e;letter-spacing:-0.3px;">References</div>
<svg style="left:1077px;top:146px" width="10" height="10"><path d="M3 0.5H6.5L9 3V9.5H3" stroke="#1e1e1e" fill="none" stroke-width="0.9"/><path d="M6.5 0.5V3H9" stroke="#1e1e1e" fill="none" stroke-width="0.8"/><path d="M0.5 2.5L1.8 5H3.2L4.5 2.5 M2.5 5V9.5" stroke="#1e1e1e" fill="none" stroke-width="1.1"/></svg>
<div class="t" style="left:1090px;top:147.5px;font-size:8.5px;color:#1e1e1e;letter-spacing:-0.3px;">App.config</div>
<svg style="left:1063px;top:159px" width="5" height="7"><path d="M0.5 0.5L4 3.5L0.5 6.5Z" stroke="#1e1e1e" fill="none" stroke-width="0.9"/></svg>
<svg style="left:1077px;top:159px" width="10" height="9"><rect x="0.5" y="0.5" width="9" height="8" fill="#d4d6dc" stroke="#333" stroke-width="0.9"/><path d="M0.5 1.2H9.5" stroke="#1e1e1e" stroke-width="1.5"/><path d="M6 4H8 M5.5 6.5H8" stroke="#1e1e1e" stroke-width="1"/></svg>
<div class="t" style="left:1090px;top:159.5px;font-size:8.5px;color:#1e1e1e;letter-spacing:-0.3px;">frmFutureValue.vb</div>
<div class="a" style="left:1044px;top:660px;width:66.5px;height:13px;background:#ffffff;"></div>
<div class="t" style="left:1048px;top:662.5px;font-size:8.5px;color:#1e1e1e;letter-spacing:-0.3px;">Solution Explorer</div>
<div class="a" style="left:1111px;top:660px;width:43px;height:12px;background:#465d97;"></div>
<div class="t" style="left:1115px;top:662.5px;font-size:8.5px;color:#dde4f7;letter-spacing:-0.3px;">Properties</div>
<div class="a" style="left:1276px;top:48px;width:4px;height:47px;background:#40568d;"></div>
<div class="t" style="left:1264px;top:48px;font-size:8.3px;color:#ffffff;writing-mode:vertical-rl">Notifications</div>
<svg style="left:2.5px;top:682.5px" width="11" height="8"><path d="M2.5 0.5H10.5L8.5 7H0.5Z" stroke="#eef2fb" fill="none" stroke-width="1"/></svg>
<div class="t" style="left:19px;top:681.5px;font-size:8.5px;color:#ffffff;letter-spacing:-0.3px;">Ready</div>
<div class="t" style="left:747px;top:681.5px;font-size:8.5px;color:#ffffff;letter-spacing:-0.3px;">Ln 30</div>
<div class="t" style="left:809px;top:681.5px;font-size:8.5px;color:#ffffff;letter-spacing:-0.3px;">Col 22</div>
<div class="t" style="left:870px;top:681.5px;font-size:8.5px;color:#ffffff;letter-spacing:-0.3px;">Ch 22</div>
<div class="t" style="left:961px;top:681.5px;font-size:8.5px;color:#ffffff;letter-spacing:-0.3px;">INS</div>
<svg style="left:1140px;top:681px" width="7" height="8"><path d="M3.5 8V1.5" stroke="#fff" stroke-width="1.6"/><path d="M0.2 4.5L3.5 0.5L6.8 4.5Z" fill="#fff"/></svg>
<div class="t" style="left:1153px;top:681.5px;font-size:8.5px;color:#ffffff;letter-spacing:-0.3px;">Add to Source Control</div>
<svg style="left:1236px;top:685px" width="5" height="3"><path d="M0 3H5L2.5 0Z" fill="#fff"/></svg>
<svg style="left:1253px;top:678px" width="15" height="15"><path d="M1 9C2.5 8 2.5 6 2.5 4.5A3.5 3.5 0 0 1 9.5 4.5C9.5 6 9.5 8 11 9Z M5 10A1.2 1.2 0 0 0 7 10" fill="#d8dcea"/><circle cx="10.5" cy="10.5" r="3.6" fill="#e0201c"/><text x="9" y="13" font-size="6" fill="#fff" font-family="Liberation Sans" font-weight="bold">1</text></svg>
<svg style="left:8px;top:24px" width="4" height="13"><rect x="0" y="0.0" width="1" height="1" fill="#777"/><rect x="2" y="1.5" width="1" height="1" fill="#777"/><rect x="0" y="3.0" width="1" height="1" fill="#777"/><rect x="2" y="4.5" width="1" height="1" fill="#777"/><rect x="0" y="6.0" width="1" height="1" fill="#777"/><rect x="2" y="7.5" width="1" height="1" fill="#777"/><rect x="0" y="9.0" width="1" height="1" fill="#777"/><rect x="2" y="10.5" width="1" height="1" fill="#777"/><rect x="0" y="12.0" width="1" height="1" fill="#777"/></svg>
<svg style="left:17px;top:26px" width="9" height="9"><circle cx="4.5" cy="4.5" r="4.2" fill="#1b4f8a"/><path d="M7 4.5H2.5M4.5 2.5L2.5 4.5L4.5 6.5" stroke="#fff" stroke-width="1.2" fill="none"/></svg>
<svg style="left:30px;top:30px" width="5" height="3"><path d="M0 0H5L2.5 2.5Z" fill="#1e1e1e"/></svg>
<svg style="left:40px;top:26px" width="9" height="9"><circle cx="4.5" cy="4.5" r="4.2" fill="#b9bdc9"/><path d="M2 4.5H6.5M4.5 2.5L6.5 4.5L4.5 6.5" stroke="#d8dcec" stroke-width="1.1" fill="none"/></svg>
<div class="a" style="left:53px;top:24px;width:1px;height:13px;background:#a9b2d4;"></div>
<svg style="left:60px;top:26px" width="10" height="10"><path d="M2 5V9.5H8.5V3.5L7 1.5H5" stroke="#333" fill="#f2f2f2" stroke-width="0.9"/><path d="M2 0.5L3 2L4.5 2.5L3 3L2 4.5L1 3L-0.5 2.5L1 2Z" fill="#e8a33a"/></svg>
<svg style="left:74px;top:30px" width="5" height="3"><path d="M0 0H5L2.5 2.5Z" fill="#1e1e1e"/></svg>
<svg style="left:82px;top:26px" width="11" height="10"><path d="M0.5 5.5H10L9 9.5H0.5Z" fill="#e8b04a"/><path d="M1.5 4.5V2.5H5.5 M4 0.5L5.8 2.5L4 4.5" stroke="#1b4f8a" stroke-width="1.2" fill="none"/></svg>
<svg style="left:98px;top:26px" width="9" height="9"><path d="M0 0H9V9H0Z M4.5 0V2.5" fill="#1b4f8a" stroke="none"/><rect x="2" y="0" width="5" height="3" fill="#cdd5f0"/><rect x="4.5" y="0.5" width="1" height="2" fill="#1b4f8a"/></svg>
<svg style="left:112px;top:26px" width="10" height="10"><rect x="4.5" y="0" width="5.5" height="5.5" fill="#1b4f8a"/><rect x="0" y="4.5" width="5.5" height="5.5" fill="#1b4f8a"/><rect x="6" y="0.5" width="3" height="1.5" fill="#cdd5f0"/><rect x="1.2" y="5" width="3" height="1.5" fill="#cdd5f0"/></svg>
<div class="a" style="left:126px;top:24px;width:1px;height:13px;background:#a9b2d4;"></div>
<svg style="left:133px;top:27px" width="8" height="8"><path d="M0 0.5H7M1 3H7M1 5H7M0 7.5H7" stroke="#bfc3cf" stroke-width="1"/></svg>
<svg style="left:147px;top:27px" width="9" height="8"><path d="M0 0.5H3M2 3H8M2 5H8M2 7.5H8" stroke="#bfc3cf" stroke-width="1"/></svg>
<div class="a" style="left:161px;top:24px;width:1px;height:13px;background:#a9b2d4;"></div>
<svg style="left:166px;top:26px" width="9" height="11"><path d="M2 3.5A3.3 3.3 0 1 1 3.5 10" stroke="#a9adbb" stroke-width="1.4" fill="none"/><path d="M0 1V5.2H4.2Z" fill="#a9adbb"/></svg>
<svg style="left:181px;top:31px" width="5" height="3"><path d="M0 0H5L2.5 2.5Z" fill="#8a8e9a"/></svg>
<svg style="left:190px;top:26px" width="9" height="11"><path d="M7 3.5A3.3 3.3 0 1 0 5.5 10" stroke="#a9adbb" stroke-width="1.4" fill="none"/><path d="M9 1V5.2H4.8Z" fill="#a9adbb"/></svg>
<svg style="left:201px;top:31px" width="5" height="3"><path d="M0 0H5L2.5 2.5Z" fill="#8a8e9a"/></svg>
<div class="a" style="left:213px;top:24px;width:1px;height:13px;background:#a9b2d4;"></div>
<div class="a" style="left:218px;top:24px;width:60px;height:14px;background:#eef0fa;"></div>
<div class="t" style="left:221px;top:26.5px;font-size:8.5px;color:#1e1e1e;letter-spacing:-0.3px;">Debug</div>
<svg style="left:272px;top:30px" width="5" height="3"><path d="M0 0H5L2.5 2.5Z" fill="#1e1e1e"/></svg>
<div class="a" style="left:282px;top:24px;width:73px;height:14px;background:#eef0fa;"></div>
<div class="t" style="left:285px;top:26.5px;font-size:8.5px;color:#1e1e1e;letter-spacing:-0.3px;">Any CPU</div>
<svg style="left:349px;top:30px" width="5" height="3"><path d="M0 0H5L2.5 2.5Z" fill="#1e1e1e"/></svg>
<svg style="left:362px;top:27px" width="7" height="8"><path d="M0.5 0L6.5 4L0.5 8Z" fill="#2f8a2f"/></svg>
<div class="t" style="left:373px;top:26.5px;font-size:8.5px;color:#1e1e1e;letter-spacing:-0.3px;">Start</div>
<svg style="left:393px;top:30px" width="5" height="3"><path d="M0 0H5L2.5 2.5Z" fill="#1e1e1e"/></svg>
<div class="a" style="left:404px;top:27px;width:2px;height:7px;background:#bfc3cf;"></div>
<div class="a" style="left:407px;top:27px;width:2px;height:7px;background:#bfc3cf;"></div>
<div class="a" style="left:419px;top:27px;width:6px;height:6px;background:#bfc3cf;"></div>
<svg style="left:432px;top:25px" width="8" height="12"><path d="M4 0.5V5 M2 3L4 5L6 3" stroke="#1b4f8a" stroke-width="1.3" fill="none"/><circle cx="4" cy="9" r="1.5" fill="#1e1e1e"/></svg>
<svg style="left:446px;top:25px" width="10" height="12"><path d="M1.5 6A3.5 3.5 0 0 1 8.5 5" stroke="#1b4f8a" stroke-width="1.5" fill="none"/><path d="M6.5 4H9.5V7Z" fill="#1b4f8a"/><circle cx="5" cy="9.5" r="1.5" fill="#1e1e1e"/></svg>
<svg style="left:462px;top:25px" width="8" height="12"><path d="M4 6V1.5 M2 3.5L4 1.5L6 3.5" stroke="#bfc3cf" stroke-width="1.2" fill="none"/><circle cx="4" cy="9" r="1.3" fill="#bfc3cf"/></svg>
<div class="a" style="left:474px;top:24px;width:1px;height:13px;background:#a9b2d4;"></div>
<svg style="left:481px;top:25px" width="11" height="11"><rect x="4" y="0" width="6.5" height="6" fill="#e8a33a"/><rect x="2" y="2" width="4" height="4" fill="#f0c060"/><circle cx="3" cy="7" r="2" stroke="#1b4f8a" fill="none"/><path d="M1.5 8.5L0 10" stroke="#1b4f8a" stroke-width="1.2"/></svg>
<svg style="left:495px;top:30px" width="5" height="6"><path d="M0 0.5H5" stroke="#666"/><path d="M0 2H5L2.5 4.5Z" fill="#1e1e1e"/></svg>
<svg style="left:1191px;top:26px" width="10" height="10"><path d="M0.5 3V9.5H8V7" stroke="#1e1e1e" fill="none" stroke-width="0.9"/><path d="M3 7C3 4 5 3 8 3 M6.5 1L8.5 3L6.5 5" stroke="#1e1e1e" fill="none" stroke-width="0.9"/></svg>
<svg style="left:1255px;top:26px" width="11" height="10"><circle cx="4" cy="3" r="2.2" stroke="#1e1e1e" fill="none" stroke-width="0.9"/><path d="M0.5 9.5C0.5 7 2 6 4 6C6 6 7.5 7 7.5 9.5" stroke="#1e1e1e" fill="none" stroke-width="0.9"/><path d="M6 0.5H10.5V4H8L7 5V4H6" stroke="#1e1e1e" fill="none" stroke-width="0.8"/></svg>
<svg style="left:10px;top:700px" width="12" height="12"><path d="M0 1.7L5 1V5.6H0Z M5.8 0.9L12 0V5.6H5.8Z M0 6.4H5V11L0 10.3Z M5.8 6.4H12V12L5.8 11.1Z" fill="#ffffff"/></svg>
<svg style="left:42px;top:700px" width="12" height="12"><rect x="1.5" y="2.5" width="6" height="7" stroke="#fff" fill="none" stroke-width="1.2"/><path d="M0 0.8H9M0 11.2H9 M10.5 2V10" stroke="#fff" stroke-width="1.2"/></svg>
<svg style="left:74px;top:698px" width="16" height="16"><circle cx="8" cy="8" r="7.8" fill="#db4437"/><path d="M8 8L1.25 4.1A7.8 7.8 0 0 0 8 15.8Z" fill="#0f9d58"/><path d="M8 8L14.75 4.1A7.8 7.8 0 0 1 8 15.8Z" fill="#f4c20d"/><path d="M8 8L1.25 4.1A7.8 7.8 0 0 1 14.75 4.1Z" fill="#db4437"/><circle cx="8" cy="8" r="3.6" fill="#fff"/><circle cx="8" cy="8" r="2.8" fill="#4285f4"/></svg>
<svg style="left:107px;top:698px" width="15" height="15"><rect x="7" y="0.5" width="6" height="5" fill="#2a4fb0" stroke="#ddd" stroke-width="0.8"/><rect x="2" y="7.5" width="6" height="5" fill="#2a4fb0" stroke="#ddd" stroke-width="0.8"/><path d="M1 14H9 M8 13.5H14" stroke="#ddd"/><path d="M5 6L10 8" stroke="#f3d34a" stroke-width="1.5"/></svg>
<svg style="left:140px;top:700px" width="15" height="13"><path d="M0 0.5H6L7 2H15V12H0Z" fill="#f6c94e"/><rect x="0" y="4" width="15" height="8" fill="#fbd96a"/><rect x="4" y="7.5" width="7" height="5" fill="#3c8ad6"/><rect x="6" y="9" width="3" height="3.5" fill="#fbd96a"/></svg>
<svg style="left:172px;top:698px" width="16" height="16"><circle cx="8" cy="8" r="8" fill="#1ed760"/><path d="M3.5 5.8C6 5 10 5.2 12.5 6.6 M4 8.4C6.2 7.8 9.5 8 11.7 9.1 M4.5 10.8C6.5 10.3 9 10.5 10.8 11.4" stroke="#1b1b1b" stroke-width="1.3" fill="none" stroke-linecap="round"/></svg>
<svg style="left:204px;top:698px" width="17" height="16"><path d="M0.5 2V10C0.5 11.5 7 11.5 7 10V2Z" fill="#f0b93a"/><ellipse cx="3.75" cy="2" rx="3.25" ry="1.5" fill="#fbe29a"/><path d="M10 1H14V5 M1 14V16 M1 15H4" stroke="#4aa34a" stroke-width="1.3" fill="none"/><circle cx="11" cy="11" r="2.5" stroke="#ccc" fill="none"/><path d="M7 15L10 12 M13 9L16 6" stroke="#ccc"/></svg>
<svg style="left:238px;top:698px" width="16" height="16"><rect x="1" y="1" width="11" height="9" fill="#e8eef8"/><path d="M2 2H9L2 9Z" fill="#1a43c7"/><ellipse cx="8" cy="13" rx="5" ry="2" fill="#d0d0d0"/><circle cx="12" cy="11" r="3" fill="#8ab56a" stroke="#eee" stroke-width="0.8"/></svg>
<div class="a" style="left:270px;top:698px;width:16px;height:16px;background:#3b3b3b;"></div>
<svg style="left:272px;top:700px" width="12" height="12"><path d="M2 3.5L10 1V4L2 6.5Z M2 6L10 8.5V11.5L2 9Z" fill="#f59d1b"/><path d="M2 6.5L10 5V8.5L2 6Z" fill="#f7b13a"/></svg>
<div class="a" style="left:295px;top:693px;width:32px;height:25px;background:#3b3f46;"></div>
<svg style="left:303px;top:698px" width="16" height="16"><path d="M11.5 0L16 2.2V13.8L11.5 16L4.5 9.6L1.6 11.9L0 11.1V4.9L1.6 4.1L4.5 6.4Z M11.5 4.4L7.4 8L11.5 11.6Z M1.6 6V10L3.6 8Z" fill="#9b6ff0" fill-rule="evenodd"/></svg>
<div class="a" style="left:68px;top:718px;width:28px;height:2px;background:#a3b8d6;"></div>
<div class="a" style="left:101px;top:718px;width:27px;height:2px;background:#a3b8d6;"></div>
<div class="a" style="left:134px;top:718px;width:27px;height:2px;background:#a3b8d6;"></div>
<div class="a" style="left:167px;top:718px;width:26px;height:2px;background:#a3b8d6;"></div>
<div class="a" style="left:199px;top:718px;width:27px;height:2px;background:#a3b8d6;"></div>
<div class="a" style="left:232px;top:718px;width:27px;height:2px;background:#a3b8d6;"></div>
<div class="a" style="left:265px;top:718px;width:27px;height:2px;background:#a3b8d6;"></div>
<div class="a" style="left:295px;top:718px;width:32px;height:2px;background:#c3d4ea;"></div>
<svg style="left:1105px;top:696px" width="21" height="21"><circle cx="10.5" cy="10.5" r="9.8" fill="#fff"/><circle cx="10.5" cy="10.5" r="8.6" fill="#3fa873"/><path d="M2.5 10.5H6L7.5 7L9 14L11 5L12.5 13L14 9L15 10.5H18.5" stroke="#fff" stroke-width="1.1" fill="none"/></svg>
<svg style="left:1142px;top:703px" width="8" height="5"><path d="M0.5 4.5L4 1L7.5 4.5" stroke="#fff" fill="none" stroke-width="1"/></svg>
<svg style="left:1155px;top:700px" width="12" height="12"><circle cx="6" cy="6" r="5.8" fill="#1c3bd6"/><circle cx="6" cy="6" r="4.8" fill="#3050e8" stroke="#7f95ff" stroke-width="0.6"/><text x="3.6" y="8.8" font-size="7.5" font-style="italic" font-weight="bold" fill="#fff" font-family="Liberation Sans">S</text></svg>
<svg style="left:1171px;top:701px" width="13" height="11"><path d="M0.5 3.5H3L6.5 0.5V10.5L3 7.5H0.5Z" stroke="#fff" fill="none" stroke-width="0.9"/><path d="M8.5 3C9.5 4.5 9.5 6.5 8.5 8 M10.5 1.5C12 4 12 7 10.5 9.5" stroke="#fff" fill="none" stroke-width="0.9"/></svg>
<svg style="left:1188px;top:700px" width="13" height="13"><path d="M1 2L3.5 0.5L6 2L3.5 3.5Z M6 2L8.5 0.5L11 2L8.5 3.5Z M1 5L3.5 3.5L6 5L3.5 6.5Z M6 5L8.5 3.5L11 5L8.5 6.5Z M3.5 7.5L6 6L8.5 7.5L6 9Z" fill="#fff"/><circle cx="9.5" cy="9.5" r="3.2" fill="#e02020"/><path d="M8.3 8.3L10.7 10.7M10.7 8.3L8.3 10.7" stroke="#fff" stroke-width="0.8"/></svg>
<div class="t" style="left:1209px;top:697px;font-size:8.3px;color:#ffffff;">4:46 PM</div>
<div class="t" style="left:1205px;top:708px;font-size:8.3px;color:#ffffff;">2/11/2020</div>
<svg style="left:1252px;top:700px" width="12" height="12"><path d="M0.5 0.5H11.5V8.5H6L3.5 11V8.5H0.5Z" stroke="#fff" fill="#fff" stroke-width="0.8"/><path d="M2.5 3H9.5M2.5 5H9.5M2.5 7H7" stroke="#333" stroke-width="0.7"/></svg>
<div class="a" style="left:1276px;top:693px;width:1px;height:27px;background:#505860;"></div>
</body></html>
